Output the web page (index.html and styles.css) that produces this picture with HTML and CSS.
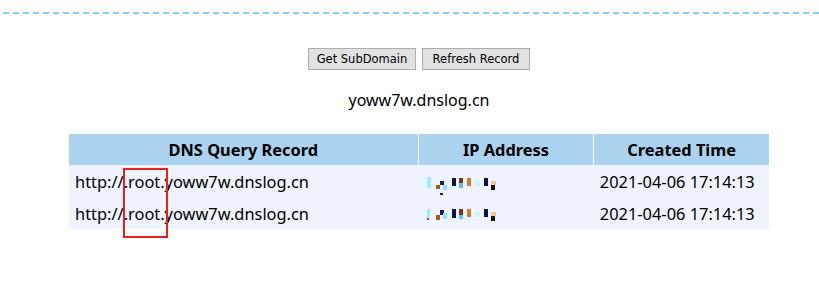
FILE: index.html
```html
<!DOCTYPE html>
<html lang="en">
<head>
  <meta charset="UTF-8">
  <title>DNSLog</title>
  <link rel="stylesheet" href="styles.css">
</head>
<body>
  <div class="top-line"></div>

  <div class="main">
    <div class="actions">
      <button class="btn">Get SubDomain</button>
      <button class="btn">Refresh Record</button>
    </div>

    <div class="domain">yoww7w.dnslog.cn</div>

    <div class="records">
      <table class="record-table">
        <thead>
          <tr>
            <th class="col-dns">DNS Query Record</th>
            <th class="col-ip">IP Address</th>
            <th class="col-time">Created Time</th>
          </tr>
        </thead>
        <tbody>
          <tr>
            <td>http://.root.yoww7w.dnslog.cn</td>
            <td class="ip-cell">
              <!-- pixelated (hidden) ip -->
              <svg class="ip-blur" width="75" height="32" viewBox="0 0 75 32">
                <rect x="1" y="12" width="4" height="11" fill="#a0ecfd"/>
                <rect x="10" y="20" width="4" height="4" fill="#a65a1a"/>
                <rect x="14" y="16" width="4" height="4" fill="#1d2060"/>
                <rect x="17" y="20" width="4" height="5" fill="#8ae4fd"/>
                <rect x="14" y="28" width="3" height="2" fill="#1d2060"/>
                <rect x="26" y="13" width="4" height="8" fill="#0f1446"/>
                <rect x="33" y="13" width="4" height="5" fill="#7b3312"/>
                <rect x="33" y="18" width="4" height="5" fill="#62bdf4"/>
                <rect x="41" y="13" width="4" height="8" fill="#c97d3a"/>
                <rect x="49" y="16" width="5" height="5" fill="#c6f5fe"/>
                <rect x="58" y="13" width="4" height="8" fill="#0f1446"/>
                <rect x="65" y="16" width="5" height="4" fill="#f5c88c"/>
                <rect x="65" y="20" width="4" height="5" fill="#111"/>
              </svg>
            </td>
            <td>2021-04-06 17:14:13</td>
          </tr>
          <tr>
            <td>http://.root.yoww7w.dnslog.cn</td>
            <td class="ip-cell">
              <svg class="ip-blur" width="75" height="32" viewBox="0 0 75 32">
                <rect x="1" y="12" width="3" height="10" fill="#a0ecfd"/>
                <rect x="1" y="21" width="2" height="2" fill="#c24a10"/>
                <rect x="10" y="18" width="4" height="5" fill="#a65a1a"/>
                <rect x="14" y="13" width="4" height="5" fill="#1d2060"/>
                <rect x="17" y="16" width="4" height="6" fill="#8ae4fd"/>
                <rect x="26" y="12" width="4" height="9" fill="#0f1446"/>
                <rect x="33" y="12" width="4" height="6" fill="#7b3312"/>
                <rect x="33" y="18" width="4" height="4" fill="#62bdf4"/>
                <rect x="41" y="12" width="4" height="8" fill="#c97d3a"/>
                <rect x="49" y="15" width="5" height="5" fill="#c6f5fe"/>
                <rect x="58" y="12" width="4" height="8" fill="#0f1446"/>
                <rect x="65" y="15" width="5" height="4" fill="#f5c88c"/>
                <rect x="65" y="19" width="4" height="5" fill="#111"/>
              </svg>
            </td>
            <td>2021-04-06 17:14:13</td>
          </tr>
        </tbody>
      </table>
      <!-- annotation box over ".root." -->
      <div class="mark"></div>
    </div>
  </div>
</body>
</html>
```

FILE: styles.css
```css
body {
  margin: 0;
  font-family: "Noto Sans", "Open Sans", sans-serif;
  color: #000;
  background: #fff;
}

.top-line {
  margin: 12px 0 0 3px;
  border-top: 2px dashed #87cefa;
}

.main {
  width: 700px;
  margin-left: 69px;
  text-align: center;
}

.actions {
  padding-top: 34px;
  display: flex;
  justify-content: center;
  gap: 6px;
}

.btn {
  font-family: "DejaVu Sans", sans-serif;
  font-size: 11.5px;
  width: 108px;
  height: 22px;
  padding: 0;
  background: #e1e1e1;
  border: 1px solid #adadad;
  color: #000;
}

.domain {
  margin-top: 19px;
  font-size: 16px;
  line-height: 22px;
}

/* extra room below so the annotation box isn't cut off */
.records {
  position: relative;
  margin-top: 23px;
  padding-bottom: 16px;
}

.record-table {
  width: 700px;
  border-collapse: collapse;
  font-size: 16.4px;
}

.record-table th {
  background: #abd3ef;
  height: 31px;
  padding: 0;
  font-weight: bold;
  border-left: 1px solid #fff;
}

.record-table th:first-child {
  border-left: none;
}

.col-dns {
  width: 349px;
}

.col-ip,
.col-time {
  width: 175px;
}

.record-table td {
  background: #eef3fe;
  height: 32px;
  padding: 0 0 0 6px;
  text-align: left;
  vertical-align: middle;
}

.record-table td.ip-cell {
  padding: 0 0 0 8px;
}

.ip-blur {
  display: block;
}

.mark {
  position: absolute;
  left: 54px;
  top: 34px;
  width: 41px;
  height: 66px;
  border: 2px solid #e8201c;
  z-index: 2;
}
```
